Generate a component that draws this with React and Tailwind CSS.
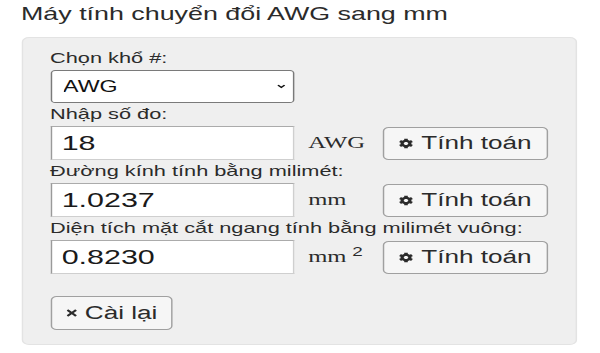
import { useState } from 'react'
import { FaCog, FaTimes } from 'react-icons/fa'

// AWG -> mm: d = 0.127 * 92^((36 - n) / 39)
const toDiameter = (n) => 0.127 * Math.pow(92, (36 - n) / 39)
const toArea = (d) => (Math.PI / 4) * d * d
const toAwg = (d) => 36 - (39 * Math.log(d / 0.127)) / Math.log(92)

function Label({ children }) {
  return (
    <label className="block mt-px mb-0.5 text-[15px] leading-[20px] text-[#2b2b2b]">
      {children}
    </label>
  )
}

function CalcButton({ onClick }) {
  return (
    <button
      onClick={onClick}
      className="flex items-center gap-[6px] w-[114px] h-[33px] pl-[10px] border border-[#a0a0a0] rounded-[4px] bg-[#f6f6f6] text-[18px] text-[#2b2b2b]"
    >
      <FaCog className="w-[10px] h-[11px]" />
      Tính toán
    </button>
  )
}

function Row({ value, onChange, unit, sup, onCalc }) {
  return (
    <div className="flex items-center">
      <input
        value={value}
        onChange={e => onChange(e.target.value)}
        className="w-[168px] h-[34px] px-[7px] bg-white border border-[#cfcfcf] border-l-[#9a9a9a] border-t-[#ababab] text-[21px] text-[#1a1a1a] outline-none"
      />
      <span className="w-[61px] pl-[10px] font-['Liberation_Serif',serif] text-[17px] text-[#2b2b2b] whitespace-nowrap">
        {unit}
        {sup && <sup className="ml-[4px] font-['Liberation_Sans',Arial,sans-serif] text-[13px]">{sup}</sup>}
      </span>
      <CalcButton onClick={onCalc} />
    </div>
  )
}

export default function App() {
  const [gauge, setGauge] = useState('AWG')
  const [awg, setAwg] = useState('18')
  const [mm, setMm] = useState('1.0237')
  const [mm2, setMm2] = useState('0.8230')

  const fromAwg = () => {
    const d = toDiameter(parseFloat(awg))
    if (isNaN(d)) return
    setMm(d.toFixed(4))
    setMm2(toArea(d).toFixed(4))
  }

  const fromMm = () => {
    const d = parseFloat(mm)
    if (!(d > 0)) return
    setAwg(toAwg(d).toFixed(2))
    setMm2(toArea(d).toFixed(4))
  }

  const fromMm2 = () => {
    const a = parseFloat(mm2)
    if (!(a > 0)) return
    const d = Math.sqrt((4 * a) / Math.PI)
    setMm(d.toFixed(4))
    setAwg(toAwg(d).toFixed(2))
  }

  const reset = () => {
    setAwg('')
    setMm('')
    setMm2('')
  }

  return (
    <div className="w-[413px] origin-top-left scale-x-[1.45] pl-[14.5px] pt-[2px] font-['Liberation_Sans',Arial,sans-serif] text-[#2b2b2b]">
      <h1 className="text-[18.5px] leading-[24px] text-[#2b2b2b]">Máy tính chuyển đổi AWG sang mm</h1>

      <div className="w-[383px] mt-[11px] pt-[9px] pl-[19px] pb-[14px] bg-[#efefef] border border-[#e3e3e3] rounded-[5px]">
        <Label>Chọn khổ #:</Label>
        <div className="relative w-[168px] h-[33px]">
          <select
            value={gauge}
            onChange={e => setGauge(e.target.value)}
            className="appearance-none w-full h-full pl-[8px] bg-white border border-[#7a7a7a] rounded-[3px] text-[16px] text-[#111] outline-none"
          >
            <option value="AWG">AWG</option>
          </select>
          <svg viewBox="0 0 10 7" className="absolute right-[6px] top-[14px] w-[6px] h-[5px] pointer-events-none">
            <path d="M1.2 1.2l3.8 3.8 3.8-3.8" fill="none" stroke="#111" strokeWidth="2.2" />
          </svg>
        </div>

        <Label>Nhập số đo:</Label>
        <Row value={awg} onChange={setAwg} unit="AWG" onCalc={fromAwg} />

        <Label>Đường kính tính bằng milimét:</Label>
        <Row value={mm} onChange={setMm} unit="mm" onCalc={fromMm} />

        <Label>Diện tích mặt cắt ngang tính bằng milimét vuông:</Label>
        <Row value={mm2} onChange={setMm2} unit="mm" sup="2" onCalc={fromMm2} />

        <button
          onClick={reset}
          className="mt-[22px] flex items-center gap-[5px] w-[84px] h-[34px] pl-[9px] border border-[#a0a0a0] rounded-[4px] bg-[#f6f6f6] text-[18px] text-[#2b2b2b]"
        >
          <FaTimes className="w-[9px] h-[10px]" />
          Cài lại
        </button>
      </div>
    </div>
  )
}
